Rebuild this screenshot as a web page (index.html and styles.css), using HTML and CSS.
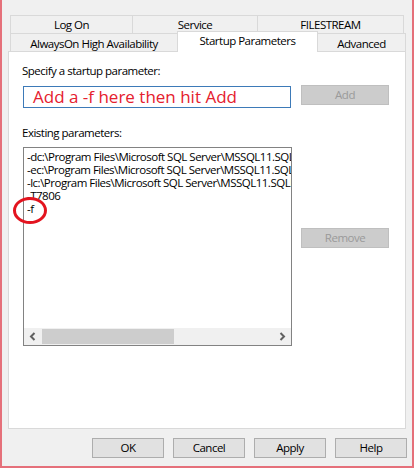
FILE: index.html
```html
<!DOCTYPE html>
<html>
<head>
<meta charset="utf-8">
<link rel="stylesheet" href="styles.css">
</head>
<body>
<div class="window">
  <div class="tabs">
    <div class="tab-row">
      <div class="tab t-logon">Log On</div>
      <div class="tab t-service">Service</div>
      <div class="tab t-filestream">FILESTREAM</div>
    </div>
    <div class="tab-row row2">
      <div class="tab t-always">AlwaysOn High Availability</div>
      <div class="tab t-startup selected">Startup Parameters</div>
      <div class="tab t-advanced">Advanced</div>
    </div>
  </div>
  <div class="panel">
    <div class="label first">Specify a startup parameter:</div>
    <div class="add-row">
      <div class="input">Add a -f here then hit Add</div>
      <div class="btn disabled btn-add">Add</div>
    </div>
    <div class="label second">Existing parameters:</div>
    <div class="list-row">
      <div class="listbox">
        <div class="lines">
          <div class="line">-dc:\Program Files\Microsoft SQL Server\MSSQL11.SQLEXPRESS\MSSQL\DATA\master.mdf</div>
          <div class="line">-ec:\Program Files\Microsoft SQL Server\MSSQL11.SQLEXPRESS\MSSQL\Log\ERRORLOG</div>
          <div class="line">-lc:\Program Files\Microsoft SQL Server\MSSQL11.SQLEXPRESS\MSSQL\DATA\mastlog.ldf</div>
          <div class="line">-T7806</div>
          <div class="line">-f</div>
        </div>
        <div class="hscroll">
          <div class="arrow"><svg width="7" height="9" viewBox="0 0 7 9"><polyline points="5.5,1 2,4.5 5.5,8" fill="none" stroke="#606060" stroke-width="2"/></svg></div>
          <div class="thumb"></div>
          <div class="track"></div>
          <div class="arrow"><svg width="7" height="9" viewBox="0 0 7 9"><polyline points="1.5,1 5,4.5 1.5,8" fill="none" stroke="#606060" stroke-width="2"/></svg></div>
        </div>
        <div class="circle"></div>
      </div>
      <div class="side">
        <div class="btn disabled btn-remove">Remove</div>
      </div>
    </div>
  </div>
  <div class="buttons">
    <div class="btn">OK</div>
    <div class="btn">Cancel</div>
    <div class="btn">Apply</div>
    <div class="btn">Help</div>
  </div>
</div>
</body>
</html>
```
FILE: styles.css
```css
html, body {
  margin: 0;
  padding: 0;
  background: #ffffff;
}
body {
  font-family: "Open Sans", "Noto Sans", sans-serif;
  font-size: 11.5px;
  letter-spacing: -0.5px;
  color: #000;
}
.window {
  box-sizing: border-box;
  width: 414px;
  height: 468px;
  background: #f0f0f0;
  border-left: 2px solid #e5707a;
  border-right: 2px solid #e5707a;
  border-bottom: 2px solid #e5707a;
  padding: 15px 0 0 6px;
  display: flex;
  flex-direction: column;
}
.tabs {
  margin-left: 2px;
  display: flex;
  flex-direction: column;
}
.tab-row {
  display: flex;
  height: 18px;
}
.tab {
  box-sizing: border-box;
  height: 18px;
  border: 1px solid #d9d9d9;
  border-bottom: none;
  background: #f0f0f0;
  text-align: center;
  line-height: 17px;
  white-space: nowrap;
}
.tab + .tab { margin-left: -1px; }
.t-logon { width: 123px; }
.t-service { width: 126px; }
.t-filestream { width: 147px; }
.t-always { width: 168px; }
.t-startup { width: 141px; }
.t-advanced { width: 89px; }
.row2 .t-always, .row2 .t-advanced { line-height: 19px; }
.tab.selected {
  position: relative;
  z-index: 1;
  height: 21px;
  margin-top: -2px;
  background: #ffffff;
  line-height: 17px;
}
.panel {
  box-sizing: border-box;
  width: 398px;
  height: 378px;
  background: #ffffff;
  border: 1px solid #d9d9d9;
  padding: 11px 0 0 14px;
}
.label {
  line-height: 16px;
  margin-left: -1px;
}
.add-row {
  display: flex;
  align-items: flex-start;
  margin-top: 6px;
}
.input {
  box-sizing: border-box;
  width: 268px;
  height: 22px;
  margin-top: 1px;
  border: 1px solid #3d7ab8;
  color: #e5202e;
  font-size: 17px;
  letter-spacing: 0;
  line-height: 19px;
  padding-left: 9px;
  white-space: nowrap;
}
.btn {
  box-sizing: border-box;
  width: 72px;
  height: 20px;
  border: 1px solid #adadad;
  background: #e1e1e1;
  text-align: center;
  line-height: 18px;
}
.btn.disabled {
  background: #cccccc;
  border-color: #bfbfbf;
  color: #9a9a9a;
  width: 88px;
}
.btn-add { margin-left: 10px; }
.label.second { margin-top: 17px; }
.list-row {
  display: flex;
  margin-top: 6px;
}
.listbox {
  position: relative;
  box-sizing: border-box;
  width: 269px;
  height: 199px;
  border: 1px solid #828282;
  display: flex;
  flex-direction: column;
}
.lines {
  flex: 1;
  overflow: hidden;
  padding: 2px 0 0 3px;
}
.line {
  white-space: nowrap;
  line-height: 13px;
}
.hscroll {
  height: 17px;
  display: flex;
  align-items: center;
  background: #f0f0f0;
}
.arrow {
  width: 17px;
  height: 17px;
  display: flex;
  align-items: center;
  justify-content: center;
}
.thumb {
  width: 132px;
  height: 15px;
  margin-left: 1px;
  background: #cdcdcd;
}
.track { flex: 1; }
.circle {
  position: absolute;
  left: -11px;
  top: 49px;
  width: 34px;
  height: 27px;
  box-sizing: border-box;
  border: 3px solid #e3141f;
  border-radius: 50%;
}
.side {
  margin-left: 9px;
  padding-top: 81px;
}
.buttons {
  display: flex;
  justify-content: flex-end;
  gap: 9px;
  margin-top: 9px;
  padding-right: 5px;
}
```
